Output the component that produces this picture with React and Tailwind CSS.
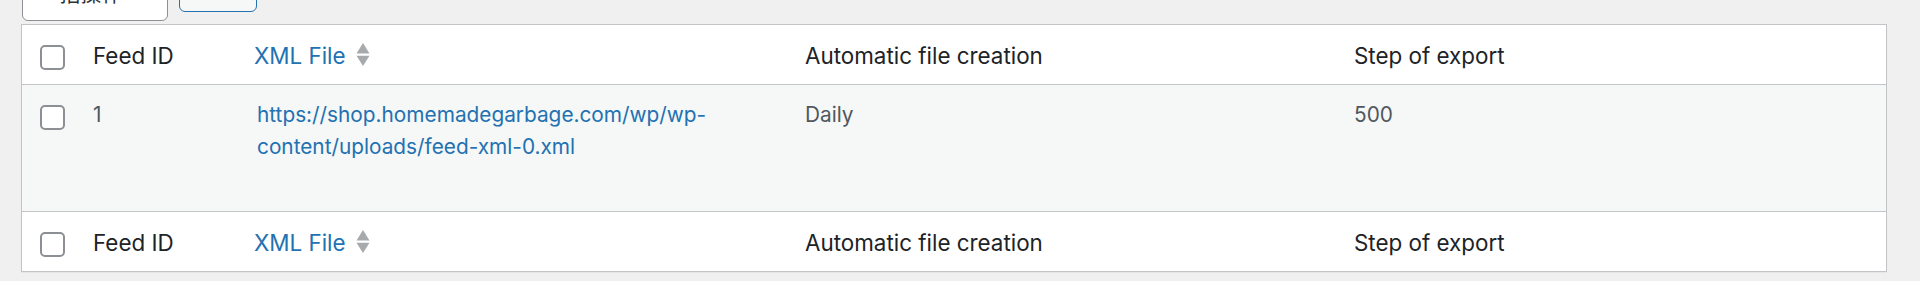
import React from 'react'

const feeds = [
  {
    id: '1',
    url: 'https://shop.homemadegarbage.com/wp/wp-content/uploads/feed-xml-0.xml',
    schedule: 'Daily',
    step: '500',
  },
]

export default function App() {
  return (
    <div className="h-[281px] w-full overflow-hidden bg-[#f0f0f1] pl-[21px] pr-[33px] font-['Inter',sans-serif]">
      {/* bulk actions bar, cut off at the top of the shot */}
      <div className="flex h-[24px] items-start gap-[11px] pl-px">
        <div className="-mt-[30px] flex h-[51px] w-[146px] items-start rounded-[6px] border-[1.5px] border-[#8c8f94] bg-white pl-[16px] pt-[7px] font-['Noto_Sans_CJK_JP',sans-serif] text-[20.8px] leading-[30px] text-[#2c3338]">
          一括操作
        </div>
        <button className="-mt-[36px] h-[48px] w-[78px] rounded-[6px] border-[1.5px] border-[#2271b1] bg-[#f6f7f7] font-['Noto_Sans_CJK_JP',sans-serif] text-[20.8px] leading-[30px] text-[#2271b1]">
          適用
        </button>
      </div>

      <div className="border border-[#c3c4c7] bg-white shadow-[0_1px_1px_rgba(0,0,0,0.04)]">
        <HeadRow top />
        {feeds.map((f) => (
          <div
            key={f.id}
            className="grid h-[127px] grid-cols-[55px_164px_548px_549px_1fr] border-b border-[#c3c4c7] bg-[#f6f7f7] text-[20.8px] leading-[31.6px] text-[#50575e]"
          >
            <div className="pl-[18px] pt-[20px]">
              <CheckBox />
            </div>
            <div className="pl-[16px] pt-[14px]">{f.id}</div>
            <div className="pl-[16px] pr-[16px] pt-[14px] text-[#2271b1]">{f.url}</div>
            <div className="pl-[16px] pt-[14px]">{f.schedule}</div>
            <div className="pl-[16px] pt-[14px]">{f.step}</div>
          </div>
        ))}
        <HeadRow />
      </div>
    </div>
  )
}

//header + footer row
function HeadRow({ top }) {
  return (
    <div
      className={`grid grid-cols-[55px_164px_548px_549px_1fr] text-[22.4px] leading-[31.4px] text-[#1d2327] ${
        top ? 'h-[60px] border-b border-[#c3c4c7]' : 'h-[59px]'
      }`}
    >
      <div className="pl-[18px] pt-[20px]">
        <CheckBox />
      </div>
      <div className="pl-[16px] pt-[14.5px]">Feed ID</div>
      <div className="pl-[13px] pt-[14.5px]">
        <span className="flex items-center gap-[10px] text-[#2271b1]">
          XML File
          <SortIcon />
        </span>
      </div>
      <div className="pl-[16px] pt-[14.5px]">Automatic file creation</div>
      <div className="pl-[16px] pt-[14.5px]">Step of export</div>
    </div>
  )
}

function CheckBox() {
  return <div className="h-[25px] w-[25px] rounded-[5px] border-2 border-[#8c8f94] bg-white" />
}

function SortIcon() {
  return (
    <svg width="14" height="23" viewBox="0 0 14 23" className="-mt-[2px] shrink-0">
      <polygon points="7,0 13.5,10.5 0.5,10.5" fill="#a7aaad" />
      <polygon points="0.5,12.8 13.5,12.8 7,23" fill="#a7aaad" />
    </svg>
  )
}
